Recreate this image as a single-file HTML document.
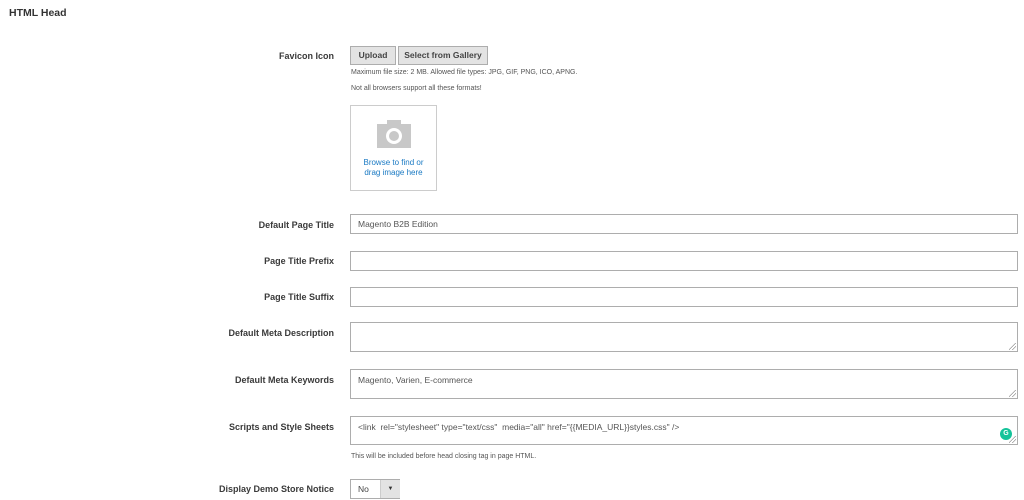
<!DOCTYPE html>
<html><head><style>
body{margin:0;width:1024px;height:500px;background:#fff;font-family:"Liberation Sans",sans-serif;position:relative;overflow:hidden;color:#303030}
.a{position:absolute}
.lbl{position:absolute;right:690px;font-size:9px;font-weight:bold;color:#3a3a3a;white-space:nowrap}
.in{position:absolute;left:350px;width:668px;border:1px solid #adadad;background:#fff;box-sizing:border-box;font-size:8.5px;color:#555;padding-left:7px}
.grip{position:absolute;right:1px;bottom:1px;width:7px;height:7px;background:linear-gradient(135deg,transparent 45%,#999 46%,#999 52%,transparent 53%,transparent 70%,#999 71%,#999 77%,transparent 78%)}
.btn{position:absolute;top:46px;height:19px;background:#e3e3e3;border:1px solid #adadad;box-sizing:border-box;font-size:8.5px;font-weight:bold;color:#444;text-align:center;line-height:17px}
.note{position:absolute;left:351px;font-size:7px;color:#555}
</style></head><body>
<div class="a" style="left:9px;top:7px;font-size:10.5px;font-weight:bold;color:#333">HTML Head</div>

<div class="lbl" style="top:51px">Favicon Icon</div>
<div class="btn" style="left:350px;width:46px">Upload</div>
<div class="btn" style="left:398px;width:90px">Select from Gallery</div>
<div class="note" style="top:69px">Maximum file size: 2 MB. Allowed file types: JPG, GIF, PNG, ICO, APNG.</div>
<div class="note" style="top:85px">Not all browsers support all these formats!</div>
<div class="a" style="left:350px;top:105px;width:87px;height:86px;border:1px solid #ccc;box-sizing:border-box">
 <svg class="a" style="left:26px;top:13px" width="34" height="30" viewBox="0 0 34 30"><rect x="0" y="5" width="34" height="24" fill="#c8c8c8"/><rect x="10" y="1" width="14" height="6" fill="#c8c8c8"/><circle cx="17" cy="17" r="8" fill="#fff"/><circle cx="17" cy="17" r="5" fill="#c8c8c8"/></svg>
 <div class="a" style="left:0;width:85px;top:52px;text-align:center;font-size:8px;color:#1979c3;line-height:10px">Browse to find or<br>drag image here</div>
</div>

<div class="lbl" style="top:220px">Default Page Title</div>
<div class="in" style="top:214px;height:20px;line-height:18px">Magento B2B Edition</div>
<div class="lbl" style="top:256px">Page Title Prefix</div>
<div class="in" style="top:251px;height:20px"></div>
<div class="lbl" style="top:292px">Page Title Suffix</div>
<div class="in" style="top:287px;height:20px"></div>
<div class="lbl" style="top:328px">Default Meta Description</div>
<div class="in" style="top:322px;height:30px"><div class="grip"></div></div>
<div class="lbl" style="top:375px">Default Meta Keywords</div>
<div class="in" style="top:369px;height:30px;padding-top:5px">Magento, Varien, E-commerce<div class="grip"></div></div>
<div class="lbl" style="top:422px">Scripts and Style Sheets</div>
<div class="in" style="top:416px;height:29px;padding-top:5px">&lt;link&nbsp; rel="stylesheet" type="text/css"&nbsp; media="all" href="{{MEDIA_URL}}styles.css" /&gt;<div class="grip"></div>
 <div class="a" style="right:5px;top:11px;width:12px;height:12px;border-radius:50%;background:#15c39a;color:#fff;font-size:7px;font-weight:bold;text-align:center;line-height:12px">G</div></div>
<div class="note" style="top:453px">This will be included before head closing tag in page HTML.</div>
<div class="lbl" style="top:484px">Display Demo Store Notice</div>
<div class="a" style="left:350px;top:479px;width:50px;height:20px;border:1px solid #adadad;box-sizing:border-box;font-size:8.5px;color:#444">
 <span class="a" style="left:7px;top:4px">No</span>
 <div class="a" style="left:29px;top:0;width:19px;height:18px;background:#e3e3e3;border-left:1px solid #ccc;text-align:center;font-size:6px;line-height:18px;color:#333">▼</div>
</div>
</body></html>
